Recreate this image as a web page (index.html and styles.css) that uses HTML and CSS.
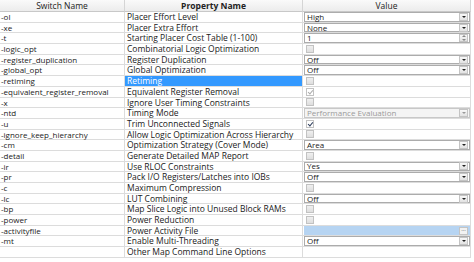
FILE: index.html
```html
<!DOCTYPE html>
<html lang="en">
<head>
    <meta charset="UTF-8">
    <title>Map Properties</title>
    <link rel="stylesheet" href="styles.css">
</head>
<body>
    <div class="prop-grid">
        <div class="head">Switch Name</div>
        <div class="head bold">Property Name</div>
        <div class="head">Value</div>

        <div class="cell sw">-ol</div>
        <div class="cell">Placer Effort Level</div>
        <div class="cell val"><div class="combo"><span>High</span><i class="arrow"></i></div></div>

        <div class="cell sw">-xe</div>
        <div class="cell">Placer Extra Effort</div>
        <div class="cell val"><div class="combo"><span>None</span><i class="arrow"></i></div></div>

        <div class="cell sw">-t</div>
        <div class="cell">Starting Placer Cost Table (1-100)</div>
        <div class="cell val"><div class="combo"><span>1</span><i class="spin"></i></div></div>

        <div class="cell sw">-logic_opt</div>
        <div class="cell">Combinatorial Logic Optimization</div>
        <div class="cell val"><i class="check"></i></div>

        <div class="cell sw">-register_duplication</div>
        <div class="cell">Register Duplication</div>
        <div class="cell val"><div class="combo"><span>Off</span><i class="arrow"></i></div></div>

        <div class="cell sw">-global_opt</div>
        <div class="cell">Global Optimization</div>
        <div class="cell val"><div class="combo"><span>Off</span><i class="arrow"></i></div></div>

        <div class="cell sw">-retiming</div>
        <div class="cell selected">Retiming</div>
        <div class="cell val"><i class="check"></i></div>

        <div class="cell sw">-equivalent_register_removal</div>
        <div class="cell">Equivalent Register Removal</div>
        <div class="cell val"><i class="check on dim"></i></div>

        <div class="cell sw">-x</div>
        <div class="cell">Ignore User Timing Constraints</div>
        <div class="cell val"><i class="check"></i></div>

        <div class="cell sw">-ntd</div>
        <div class="cell">Timing Mode</div>
        <div class="cell val"><div class="combo disabled"><span>Performance Evaluation</span><i class="arrow"></i></div></div>

        <div class="cell sw">-u</div>
        <div class="cell">Trim Unconnected Signals</div>
        <div class="cell val"><i class="check on"></i></div>

        <div class="cell sw">-ignore_keep_hierarchy</div>
        <div class="cell">Allow Logic Optimization Across Hierarchy</div>
        <div class="cell val"><i class="check"></i></div>

        <div class="cell sw">-cm</div>
        <div class="cell">Optimization Strategy (Cover Mode)</div>
        <div class="cell val"><div class="combo"><span>Area</span><i class="arrow"></i></div></div>

        <div class="cell sw">-detail</div>
        <div class="cell">Generate Detailed MAP Report</div>
        <div class="cell val"><i class="check"></i></div>

        <div class="cell sw">-ir</div>
        <div class="cell">Use RLOC Constraints</div>
        <div class="cell val"><div class="combo"><span>Yes</span><i class="arrow"></i></div></div>

        <div class="cell sw">-pr</div>
        <div class="cell">Pack I/O Registers/Latches into IOBs</div>
        <div class="cell val"><div class="combo"><span>Off</span><i class="arrow"></i></div></div>

        <div class="cell sw">-c</div>
        <div class="cell">Maximum Compression</div>
        <div class="cell val"><i class="check"></i></div>

        <div class="cell sw">-lc</div>
        <div class="cell">LUT Combining</div>
        <div class="cell val"><div class="combo"><span>Off</span><i class="arrow"></i></div></div>

        <div class="cell sw">-bp</div>
        <div class="cell">Map Slice Logic into Unused Block RAMs</div>
        <div class="cell val"><i class="check"></i></div>

        <div class="cell sw">-power</div>
        <div class="cell">Power Reduction</div>
        <div class="cell val"><i class="check"></i></div>

        <div class="cell sw">-activityfile</div>
        <div class="cell">Power Activity File</div>
        <div class="cell val"><div class="file"><span></span><i class="dots">...</i></div></div>

        <div class="cell sw">-mt</div>
        <div class="cell">Enable Multi-Threading</div>
        <div class="cell val"><div class="combo"><span>Off</span><i class="arrow"></i></div></div>

        <div class="cell sw"></div>
        <div class="cell">Other Map Command Line Options</div>
        <div class="cell val"></div>
    </div>
</body>
</html>
```

FILE: styles.css
```css
body {
    margin: 0;
    background: #fff;
    font-family: 'Open Sans', 'Noto Sans', sans-serif;
    font-size: 8.5px;
    color: #1a1a1a;
}
.prop-grid {
    display: grid;
    grid-template-columns: 125px 178px 168px;
    grid-template-rows: 12px;
    grid-auto-rows: 10.7px;
    width: 471px;
}
.head {
    background: linear-gradient(#fafafa, #ececec);
    border-right: 1px solid #d5d5d5;
    border-bottom: 1px solid #c8c8c8;
    text-align: center;
    line-height: 11px;
    color: #222;
}
.head.bold {
    font-weight: bold;
}
.cell {
    border-right: 1px solid #dcdcdc;
    border-bottom: 1px solid #dcdcdc;
    padding-left: 2px;
    line-height: 10px;
    white-space: nowrap;
    box-sizing: border-box;
}
.sw {
    padding-left: 1px;
    font-size: 8px;
}
.selected {
    background: #3399ff;
    color: #fff;
}
.val {
    padding: 0 0 0 1px;
    display: flex;
    align-items: center;
}
.combo, .file {
    flex: 1;
    height: 100%;
    box-sizing: border-box;
    border: 1px solid #acacac;
    background: #fff;
    display: flex;
    align-items: center;
    line-height: 8px;
    font-size: 8px;
}
.combo span, .file span {
    flex: 1;
    padding-left: 2px;
}
.combo.disabled {
    background: #f4f4f4;
    color: #9a9a9a;
    border-color: #c8c8c8;
}
.arrow, .spin, .dots {
    width: 7px;
    height: 6px;
    margin-right: 1px;
    border: 1px solid #c4c4c4;
    background: linear-gradient(#f8f8f8, #e2e2e2);
    position: relative;
}
.arrow::after {
    content: "";
    position: absolute;
    left: 2px;
    top: 2px;
    border-left: 2px solid transparent;
    border-right: 2px solid transparent;
    border-top: 2px solid #222;
}
.combo.disabled .arrow::after {
    border-top-color: #999;
}
.spin::before, .spin::after {
    content: "";
    position: absolute;
    left: 2px;
    border-left: 2px solid transparent;
    border-right: 2px solid transparent;
}
.spin::before {
    top: 0;
    border-bottom: 2px solid #888;
}
.spin::after {
    bottom: 0;
    border-top: 2px solid #888;
}
.file {
    background: #b6d4f2;
    border-color: #b6d4f2;
}
.dots {
    font-style: normal;
    font-size: 6px;
    line-height: 3px;
    text-align: center;
    color: #555;
    background: #f2f2f2;
}
.check {
    width: 6px;
    height: 6px;
    margin-left: 2px;
    border: 1px solid #c2c2c2;
    background: linear-gradient(#f0f0f0, #dedede);
    position: relative;
}
.check.on::after {
    content: "";
    position: absolute;
    left: 2px;
    top: 0;
    width: 1.5px;
    height: 4px;
    border-right: 1px solid #2a3a5a;
    border-bottom: 1px solid #2a3a5a;
    transform: rotate(40deg);
}
.check.dim::after {
    border-color: #aaa;
}
.check.on {
    background: #fff;
}
```
